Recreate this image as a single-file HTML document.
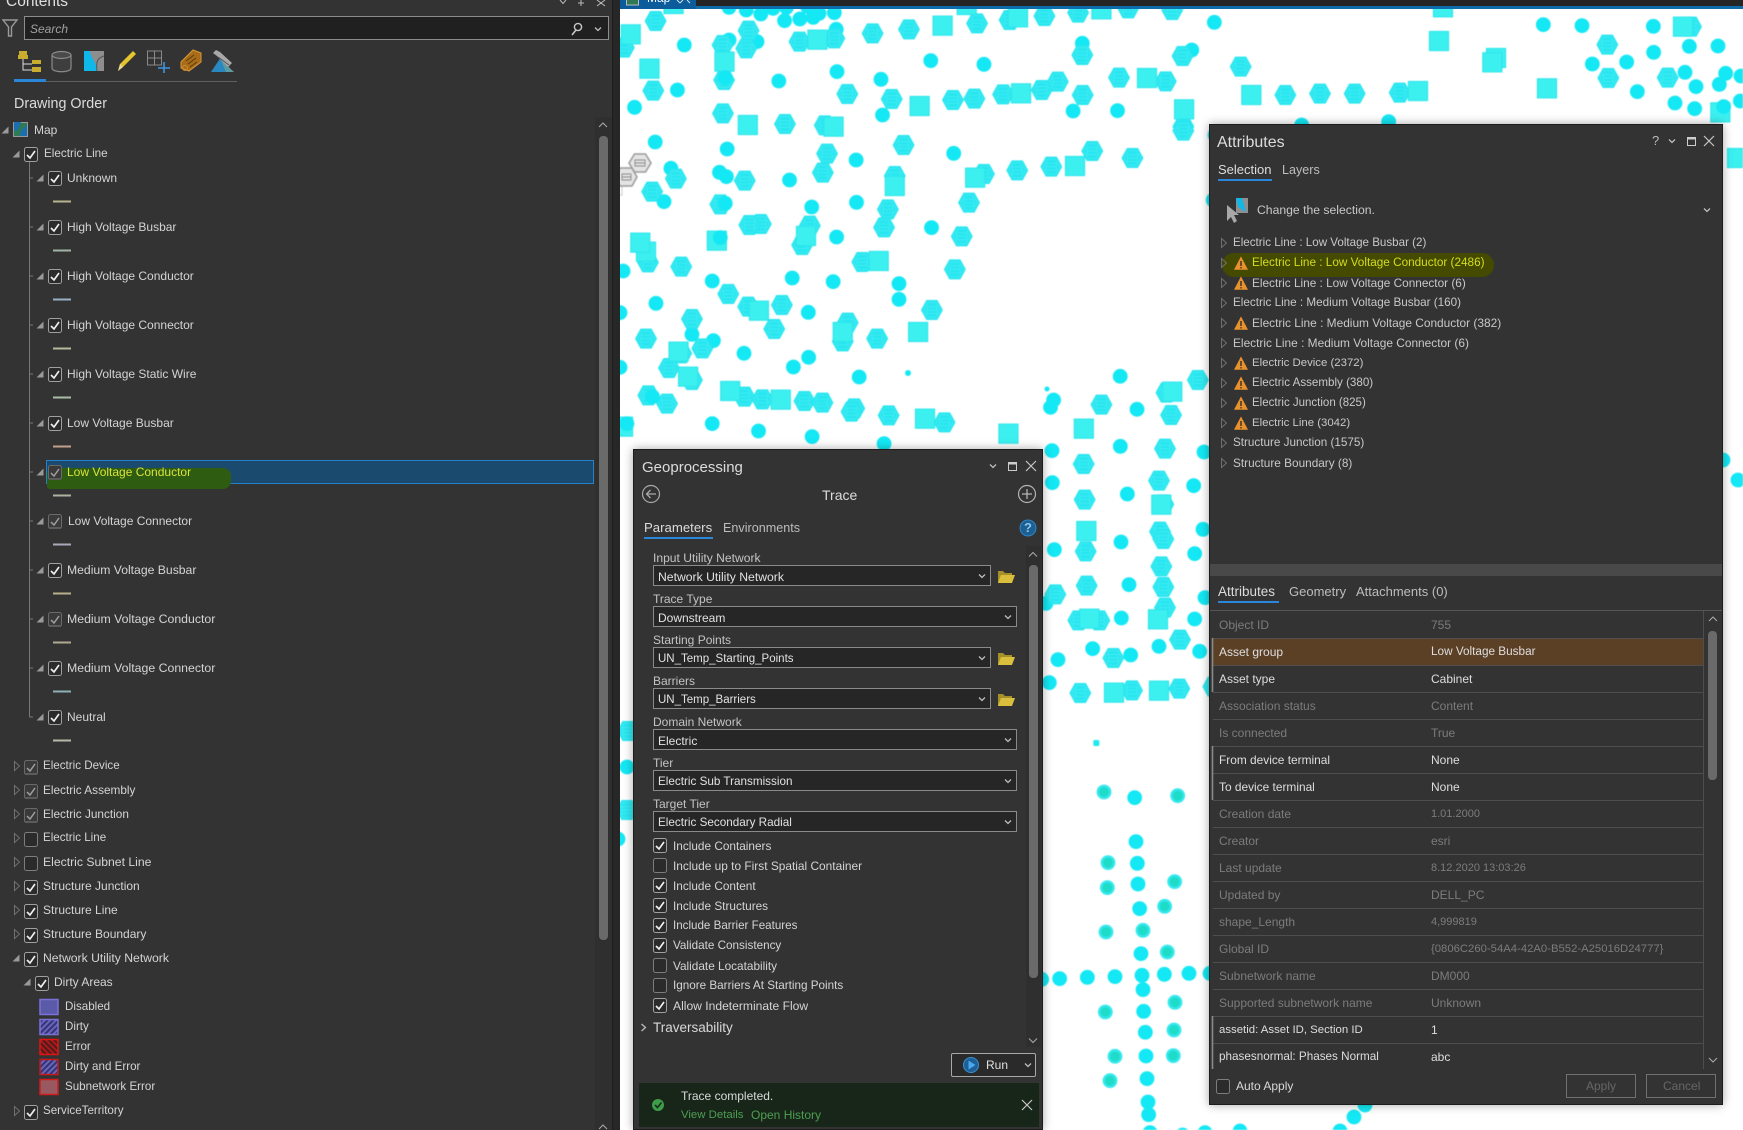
<!DOCTYPE html>
<html><head><meta charset="utf-8"><title>ArcGIS Pro</title>
<style>
html{margin:0;padding:0;width:1743px;height:1130px;overflow:hidden;background:#fff}
body{margin:0;padding:0;background:#fff;position:relative;width:1743px;height:1130px;overflow:hidden;font-family:"Liberation Sans",sans-serif;font-size:12px;color:#d4d4d4}
#w{position:absolute;left:0;top:0;width:1743px;height:1130px;overflow:hidden}
p{position:absolute;margin:0;white-space:nowrap;line-height:16px}
.b{position:absolute;box-sizing:border-box}
.dim{color:#7c7c7c}
.br{color:#dedede}
.fld{position:absolute;box-sizing:border-box;left:653px;height:21px;background:#262626;border:1px solid #8a8a8a}
svg{position:absolute;left:0;top:0}
</style></head><body><div id="w">

<svg width="1743" height="1130" viewBox="0 0 1743 1130" style="filter:blur(.4px)">
<defs>
<g id="c"><circle r="7.4" fill="#14e8f4"/></g>
<g id="g"><circle r="7.4" fill="#35e8ee"/><circle r="5" fill="#1edcc8"/></g>
<g id="h"><polygon points="-11,0 -5.5,-10 5.5,-10 11,0 5.5,10 -5.5,10" fill="#28e6f0"/><polygon points="-8.5,0 -4.2,-7.5 4.2,-7.5 8.5,0 4.2,7.5 -4.2,7.5" fill="none" stroke="#48eef2" stroke-width=".7"/><path d="M-5-3.5H5V3.5H-5ZM-5 0H5" fill="none" stroke="#4aeef2" stroke-width=".7"/></g>
<g id="s"><rect x="-9.6" y="-9.6" width="19.2" height="19.2" fill="#3cf0f0" stroke="#2ce4ea" stroke-width="1"/></g>
<g id="Ac" transform="scale(2.613,3)"><use href="#c"/></g>
<g id="Ah" transform="scale(2.613,3)"><use href="#h"/></g>
<g id="As" transform="scale(2.613,3)"><use href="#s"/></g>
<g id="Bc" transform="scale(3)"><use href="#c"/></g>
<g id="Bg" transform="scale(3)"><use href="#g"/></g>
<g id="Bh" transform="scale(3)"><use href="#h"/></g>
<g id="Bs" transform="scale(3)"><use href="#s"/></g>
</defs>
<g transform="translate(620,0) scale(.3827,.33333)">
<use href="#Ac" x="168" y="135"/><use href="#Ac" x="285" y="120"/><use href="#Ac" x="358" y="125"/><use href="#Ac" x="335" y="90"/><use href="#Ac" x="565" y="88"/><use href="#Ac" x="430" y="62"/><use href="#Ac" x="470" y="57"/><use href="#Ac" x="505" y="52"/><use href="#Ac" x="520" y="40"/><use href="#Ac" x="560" y="38"/><use href="#Ac" x="368" y="42"/><use href="#Ac" x="330" y="30"/><use href="#Ac" x="285" y="22"/><use href="#Ac" x="400" y="25"/><use href="#Ac" x="435" y="22"/><use href="#Ac" x="490" y="20"/><use href="#Ac" x="1553" y="67"/><use href="#Ac" x="812" y="182"/><use href="#Ac" x="951" y="193"/><use href="#Ac" x="1208" y="130"/><use href="#Ac" x="1494" y="150"/><use href="#Ac" x="567" y="215"/><use href="#Ac" x="682" y="238"/><use href="#Ac" x="415" y="243"/><use href="#Ac" x="150" y="270"/><use href="#Ac" x="38" y="322"/><use href="#Ac" x="686" y="345"/><use href="#Ac" x="1184" y="333"/><use href="#Ac" x="1300" y="332"/><use href="#Ac" x="92" y="426"/><use href="#Ac" x="280" y="447"/><use href="#Ac" x="872" y="460"/><use href="#Ac" x="617" y="480"/><use href="#Ac" x="133" y="505"/><use href="#Ac" x="260" y="517"/><use href="#Ac" x="278" y="530"/><use href="#Ac" x="443" y="540"/><use href="#Ac" x="115" y="605"/><use href="#Ac" x="618" y="607"/><use href="#Ac" x="501" y="621"/><use href="#Ac" x="566" y="711"/><use href="#Ac" x="814" y="683"/><use href="#Ac" x="8" y="813"/><use href="#Ac" x="241" y="843"/><use href="#Ac" x="450" y="834"/><use href="#Ac" x="557" y="845"/><use href="#Ac" x="729" y="851"/><use href="#Ac" x="729" y="898"/><use href="#Ac" x="94" y="910"/><use href="#Ac" x="492" y="937"/><use href="#Ac" x="188" y="1003"/><use href="#Ac" x="244" y="1022"/><use href="#Ac" x="324" y="1060"/><use href="#Ac" x="493" y="1072"/><use href="#Ac" x="453" y="1101"/><use href="#Ac" x="625" y="1131"/><use href="#Ac" x="241" y="1271"/><use href="#Ac" x="362" y="1293"/><use href="#Ac" x="502" y="1310"/><use href="#Ac" x="690" y="1331"/><use href="#Ac" x="1133" y="1200"/><use href="#Ac" x="1125" y="1222"/><use href="#Ac" x="1351" y="1228"/><use href="#Ac" x="1555" y="405"/><use href="#Ac" x="1550" y="600"/><use href="#Ac" x="0" y="938"/><use href="#Ac" x="0" y="1102"/>
<use href="#Ah" x="93" y="63"/><use href="#Ah" x="10" y="143"/><use href="#Ah" x="268" y="135"/><use href="#Ah" x="330" y="145"/><use href="#Ah" x="336" y="92"/><use href="#Ah" x="469" y="125"/><use href="#Ah" x="560" y="115"/><use href="#Ah" x="660" y="100"/><use href="#Ah" x="755" y="88"/><use href="#Ah" x="933" y="70"/><use href="#Ah" x="1018" y="60"/><use href="#Ah" x="1109" y="48"/><use href="#Ah" x="1197" y="38"/><use href="#Ah" x="1328" y="25"/><use href="#Ah" x="1443" y="30"/><use href="#Ah" x="1208" y="165"/><use href="#Ah" x="1470" y="168"/><use href="#Ah" x="272" y="240"/><use href="#Ah" x="87" y="272"/><use href="#Ah" x="594" y="282"/><use href="#Ah" x="710" y="297"/><use href="#Ah" x="870" y="300"/><use href="#Ah" x="926" y="296"/><use href="#Ah" x="1001" y="283"/><use href="#Ah" x="1102" y="270"/><use href="#Ah" x="1144" y="245"/><use href="#Ah" x="1209" y="285"/><use href="#Ah" x="1304" y="233"/><use href="#Ah" x="1426" y="244"/><use href="#Ah" x="269" y="340"/><use href="#Ah" x="431" y="372"/><use href="#Ah" x="535" y="376"/><use href="#Ah" x="1472" y="380"/><use href="#Ah" x="1472" y="392"/><use href="#Ah" x="741" y="435"/><use href="#Ah" x="1234" y="453"/><use href="#Ah" x="1339" y="474"/><use href="#Ah" x="1127" y="500"/><use href="#Ah" x="1038" y="511"/><use href="#Ah" x="951" y="522"/><use href="#Ah" x="541" y="461"/><use href="#Ah" x="530" y="518"/><use href="#Ah" x="146" y="536"/><use href="#Ah" x="326" y="542"/><use href="#Ah" x="84" y="575"/><use href="#Ah" x="718" y="528"/><use href="#Ah" x="912" y="608"/><use href="#Ah" x="262" y="613"/><use href="#Ah" x="700" y="628"/><use href="#Ah" x="690" y="682"/><use href="#Ah" x="368" y="672"/><use href="#Ah" x="338" y="675"/><use href="#Ah" x="496" y="677"/><use href="#Ah" x="476" y="735"/><use href="#Ah" x="893" y="709"/><use href="#Ah" x="73" y="787"/><use href="#Ah" x="160" y="800"/><use href="#Ah" x="633" y="786"/><use href="#Ah" x="875" y="808"/><use href="#Ah" x="283" y="882"/><use href="#Ah" x="335" y="920"/><use href="#Ah" x="423" y="915"/><use href="#Ah" x="815" y="930"/><use href="#Ah" x="188" y="957"/><use href="#Ah" x="403" y="987"/><use href="#Ah" x="595" y="968"/><use href="#Ah" x="582" y="1024"/><use href="#Ah" x="672" y="1016"/><use href="#Ah" x="68" y="1016"/><use href="#Ah" x="215" y="1045"/><use href="#Ah" x="160" y="1060"/><use href="#Ah" x="128" y="1104"/><use href="#Ah" x="188" y="1140"/><use href="#Ah" x="74" y="1186"/><use href="#Ah" x="123" y="1211"/><use href="#Ah" x="325" y="1190"/><use href="#Ah" x="372" y="1198"/><use href="#Ah" x="482" y="1203"/><use href="#Ah" x="529" y="1208"/><use href="#Ah" x="612" y="1225"/><use href="#Ah" x="605" y="1235"/><use href="#Ah" x="702" y="1246"/><use href="#Ah" x="848" y="1267"/><use href="#Ah" x="1258" y="1214"/><use href="#Ah" x="1440" y="1245"/><use href="#Ah" x="1510" y="1140"/><use href="#Ah" x="1428" y="1178"/>
<use href="#As" x="28" y="103"/><use href="#As" x="516" y="119"/><use href="#As" x="843" y="77"/><use href="#As" x="1040" y="52"/><use href="#As" x="906" y="15"/><use href="#As" x="1258" y="28"/><use href="#As" x="140" y="12"/><use href="#As" x="77" y="206"/><use href="#As" x="273" y="185"/><use href="#As" x="334" y="375"/><use href="#As" x="558" y="380"/><use href="#As" x="783" y="318"/><use href="#As" x="1048" y="280"/><use href="#As" x="1377" y="234"/><use href="#As" x="1474" y="328"/><use href="#As" x="1189" y="498"/><use href="#As" x="928" y="533"/><use href="#As" x="718" y="558"/><use href="#As" x="253" y="722"/><use href="#As" x="68" y="755"/><use href="#As" x="53" y="728"/><use href="#As" x="486" y="708"/><use href="#As" x="676" y="783"/><use href="#As" x="363" y="932"/><use href="#As" x="582" y="996"/><use href="#As" x="779" y="996"/><use href="#As" x="153" y="1055"/><use href="#As" x="178" y="1130"/><use href="#As" x="288" y="1173"/><use href="#As" x="420" y="1199"/><use href="#As" x="797" y="1256"/><use href="#As" x="1015" y="1301"/><use href="#As" x="1212" y="1286"/><use href="#As" x="1443" y="1175"/><use href="#As" x="8" y="1280"/>
<use href="#Ac" x="18" y="1271"/><use href="#Ac" x="275" y="610"/><use href="#Ac" x="262" y="713"/><use href="#Ac" x="275" y="233"/><use href="#Ac" x="85" y="1190"/><use href="#Ac" x="1307" y="1129"/>
</g>
<circle cx="908" cy="373" r="3" fill="#14e8f4"/><circle cx="1047" cy="389" r="2.5" fill="#14e8f4"/>
<g transform="translate(1040,440) scale(.33333)">
<use href="#Bc" x="36" y="32"/><use href="#Bc" x="241" y="19"/><use href="#Bc" x="492" y="36"/><use href="#Bc" x="37" y="128"/><use href="#Bc" x="262" y="162"/><use href="#Bc" x="461" y="137"/><use href="#Bc" x="243" y="306"/><use href="#Bc" x="489" y="268"/><use href="#Bc" x="43" y="329"/><use href="#Bc" x="464" y="341"/><use href="#Bc" x="267" y="434"/><use href="#Bc" x="495" y="473"/><use href="#Bc" x="18" y="490"/><use href="#Bc" x="244" y="534"/><use href="#Bc" x="464" y="537"/><use href="#Bc" x="158" y="626"/><use href="#Bc" x="272" y="645"/><use href="#Bc" x="357" y="619"/><use href="#Bc" x="479" y="634"/><use href="#Bc" x="54" y="659"/><use href="#Bc" x="28" y="728"/>
<use href="#Bh" x="375" y="26"/><use href="#Bh" x="131" y="72"/><use href="#Bh" x="357" y="122"/><use href="#Bh" x="134" y="179"/><use href="#Bh" x="370" y="193"/><use href="#Bh" x="360" y="275"/><use href="#Bh" x="370" y="297"/><use href="#Bh" x="137" y="334"/><use href="#Bh" x="364" y="379"/><use href="#Bh" x="140" y="437"/><use href="#Bh" x="370" y="441"/><use href="#Bh" x="46" y="463"/><use href="#Bh" x="375" y="503"/><use href="#Bh" x="115" y="541"/><use href="#Bh" x="178" y="541"/><use href="#Bh" x="220" y="654"/><use href="#Bh" x="420" y="599"/><use href="#Bh" x="121" y="759"/><use href="#Bh" x="276" y="751"/><use href="#Bh" x="418" y="746"/><use href="#Bh" x="520" y="740"/>
<use href="#Bs" x="364" y="194"/><use href="#Bs" x="139" y="273"/><use href="#Bs" x="148" y="536"/><use href="#Bs" x="354" y="538"/><use href="#Bs" x="222" y="758"/><use href="#Bs" x="357" y="752"/>
</g>
<g transform="translate(1040,700) scale(.33333)">
<use href="#Bg" x="192" y="276"/><use href="#Bg" x="413" y="287"/><use href="#Bg" x="204" y="488"/><use href="#Bg" x="202" y="563"/><use href="#Bg" x="404" y="545"/><use href="#Bg" x="374" y="619"/><use href="#Bg" x="198" y="696"/><use href="#Bg" x="309" y="691"/><use href="#Bg" x="382" y="756"/><use href="#Bg" x="405" y="907"/><use href="#Bg" x="196" y="936"/><use href="#Bg" x="402" y="990"/><use href="#Bg" x="225" y="1069"/><use href="#Bg" x="400" y="1067"/><use href="#Bg" x="210" y="1142"/>
<use href="#Bc" x="284" y="293"/><use href="#Bc" x="288" y="425"/><use href="#Bc" x="292" y="490"/><use href="#Bc" x="294" y="552"/><use href="#Bc" x="299" y="626"/><use href="#Bc" x="303" y="761"/><use href="#Bc" x="306" y="826"/><use href="#Bc" x="309" y="869"/><use href="#Bc" x="311" y="934"/><use href="#Bc" x="316" y="997"/><use href="#Bc" x="318" y="1068"/><use href="#Bc" x="321" y="1136"/><use href="#Bc" x="324" y="1206"/><use href="#Bc" x="326" y="1244"/><use href="#Bc" x="330" y="1298"/><use href="#Bc" x="59" y="836"/><use href="#Bc" x="142" y="832"/><use href="#Bc" x="225" y="830"/><use href="#Bc" x="373" y="823"/><use href="#Bc" x="447" y="820"/><use href="#Bc" x="510" y="820"/><use href="#Bc" x="5" y="838"/><use href="#Bc" x="428" y="1305"/><use href="#Bc" x="495" y="1298"/>
<rect x="160" y="120" width="18" height="18" rx="4" fill="#20eaf0"/>
</g>
<g transform="translate(1221,0) scale(.33333)">
<use href="#Bc" x="967" y="74"/><use href="#Bc" x="1083" y="77"/><use href="#Bc" x="1297" y="79"/><use href="#Bc" x="1405" y="139"/><use href="#Bc" x="1491" y="138"/><use href="#Bc" x="1298" y="157"/><use href="#Bc" x="1217" y="186"/><use href="#Bc" x="1114" y="192"/><use href="#Bc" x="1249" y="275"/><use href="#Bc" x="1514" y="220"/><use href="#Bc" x="1425" y="260"/><use href="#Bc" x="1495" y="253"/><use href="#Bc" x="1362" y="309"/><use href="#Bc" x="1421" y="326"/><use href="#Bc" x="1560" y="228"/><use href="#Bc" x="1558" y="303"/><use href="#Bc" x="242" y="375"/><use href="#Bc" x="503" y="365"/>
<use href="#Bh" x="59" y="200"/><use href="#Bh" x="193" y="285"/><use href="#Bh" x="297" y="281"/><use href="#Bh" x="401" y="281"/><use href="#Bh" x="536" y="278"/><use href="#Bh" x="1159" y="134"/><use href="#Bh" x="1162" y="234"/><use href="#Bh" x="1340" y="233"/><use href="#Bh" x="1410" y="80"/>
<use href="#Bc" x="1392" y="217"/>
<use href="#Bs" x="666" y="22"/><use href="#Bs" x="654" y="123"/><use href="#Bs" x="825" y="174"/><use href="#Bs" x="814" y="187"/><use href="#Bs" x="91" y="285"/><use href="#Bs" x="591" y="273"/><use href="#Bs" x="978" y="265"/><use href="#Bs" x="1386" y="80"/><use href="#Bs" x="1498" y="337"/>
<use href="#Bc" x="1508" y="320"/>
</g>
<use href="#s" x="1737" y="158"/><use href="#c" x="1723" y="460"/><use href="#c" x="1738" y="480"/>
<use href="#h" x="628" y="731"/><use href="#c" x="627" y="767"/><use href="#h" x="627" y="810"/><use href="#c" x="618" y="839"/>
<use href="#c" x="1240" y="1131"/><use href="#c" x="1340" y="1131"/><use href="#c" x="1365" y="1105"/><use href="#c" x="1354" y="1117"/>
<g fill="#e4e4e4" stroke="#9a9a9a" stroke-width="1.500">
<rect x="619" y="178" width="3" height="17" fill="#fff" stroke="#ccc" stroke-width="1"/>
<polygon points="615,177 620,168 632,168 637,177 632,186 620,186"/>
<polygon points="629,163 634.500,154 645.500,154 651,163 645.500,172 634.500,172"/>
<path d="M622 174H631V180H622ZM622 177H631M635 160H645V166H635ZM635 163H645" fill="none" stroke="#8a8a8a" stroke-width=".9"/>
</g>
</svg>

<!-- top strip -->
<div class="b" style="left:612px;top:0;width:1131px;height:6px;background:#252526"></div>
<div class="b" style="left:620px;top:6px;width:1123px;height:3px;background:#0f6cab"></div>
<div class="b" style="left:620px;top:0;width:76px;height:9px;background:#0c5c9c"></div>
<!-- contents panel -->
<div class="b" style="left:0;top:0;width:612px;height:1130px;background:#333"></div>
<div class="b" style="left:612px;top:0;width:8px;height:1130px;background:#272727;border-left:1px solid #1c1c1c"></div>
<div class="b" style="left:595px;top:117px;width:17px;height:1013px;background:#2f2f2f"></div>
<div class="b" style="left:599px;top:136px;width:9px;height:804px;background:#6a6a6a;border-radius:4px"></div>
<div class="b" style="left:24px;top:16px;width:585px;height:24px;background:#202020;border:1px solid #8c8c8c"></div>
<div class="b" style="left:14px;top:79px;width:32px;height:3px;background:#2a86d8"></div>
<div class="b" style="left:46px;top:81px;width:191px;height:1px;background:#5f5f5f"></div>
<div class="b" style="left:46px;top:460px;width:548px;height:24px;background:#1a4a6e;border:1px solid #2580c8"></div>
<div class="b" style="left:47px;top:468px;width:184px;height:21px;background:#2e5c10;border-radius:6px 8px 8px 3px"></div>

<!-- geoprocessing -->
<div class="b" style="left:633px;top:449px;width:410px;height:681px;background:#333;border:1px solid #1d1d1d;box-shadow:0 0 9px rgba(0,0,0,.35)"></div>
<div class="b" style="left:1026px;top:546px;width:15px;height:501px;background:#2f2f2f"></div>
<div class="b" style="left:1029px;top:565px;width:9px;height:413px;background:#6a6a6a;border-radius:4px"></div>
<div class="b" style="left:644px;top:537px;width:69px;height:2px;background:#2a86d8"></div>
<div class="fld" style="top:565px;width:338px"></div>
<div class="fld" style="top:606px;width:364px"></div>
<div class="fld" style="top:647px;width:338px"></div>
<div class="fld" style="top:688px;width:338px"></div>
<div class="fld" style="top:729px;width:364px"></div>
<div class="fld" style="top:770px;width:364px"></div>
<div class="fld" style="top:811px;width:364px"></div>
<div class="b" style="left:951px;top:1053px;width:85px;height:24px;background:#2a2a2a;border:1px solid #a8a8a8;border-radius:2px"></div>
<div class="b" style="left:639px;top:1083px;width:400px;height:44px;background:#18261a"></div>

<!-- attributes -->
<div class="b" style="left:1209px;top:124px;width:514px;height:981px;background:#333;border:1px solid #1d1d1d;box-shadow:0 0 9px rgba(0,0,0,.35)"></div>
<div class="b" style="left:1218px;top:179px;width:54px;height:2px;background:#2a86d8"></div>
<div class="b" style="left:1222px;top:253px;width:272px;height:24px;background:#444a00;border-radius:12px"></div>
<div class="b" style="left:1210px;top:564px;width:512px;height:12px;background:#494949"></div>
<div class="b" style="left:1218px;top:601px;width:61px;height:2px;background:#2a86d8"></div>
<div class="b" style="left:1210px;top:610px;width:512px;height:1px;background:#555"></div>
<div class="b" style="left:1213px;top:638px;width:490px;height:27px;background:#5c4026"></div>
<div class="b" style="left:1708px;top:631px;width:9px;height:149px;background:#6a6a6a;border-radius:4px"></div>
<div class="b" style="left:1566px;top:1074px;width:70px;height:24px;border:1px solid #707070"></div>
<div class="b" style="left:1646px;top:1074px;width:70px;height:24px;border:1px solid #707070"></div>

<!-- icons overlay -->
<svg width="1743" height="1130" viewBox="0 0 1743 1130">
<defs>
<g id="cb"><rect x=".5" y=".5" width="13" height="14" rx="2" fill="#2b2b2b" stroke="#a0a0a0"/><path d="M3 8l3 3 5-7" fill="none" stroke="#efefef" stroke-width="1.7"/></g>
<g id="cg"><rect x=".5" y=".5" width="13" height="14" rx="2" fill="#3a3a3a" stroke="#6a6a6a"/><path d="M3 8l3 3 5-7" fill="none" stroke="#a0a0a0" stroke-width="1.5"/><rect x="1" y="13" width="12" height="2" fill="#5c5c5c"/></g>
<g id="co"><rect x=".5" y=".5" width="13" height="14" rx="2" fill="#2b2b2b" stroke="#7d7d7d"/></g>
<path id="tf" d="M3.500-3.500V3.500H-3.500Z" fill="#9a9a9a"/>
<path id="to" d="M-2-4.500L3 0L-2 4.500Z" fill="none" stroke="#707070"/>
<path id="ch" d="M-3-1.500L0 1.500L3-1.500" fill="none" stroke="#bdbdbd" stroke-width="1.300"/>
<path id="xx" d="M-5-5L5 5M5-5L-5 5" fill="none" stroke="#c8c8c8" stroke-width="1.200"/>
<g id="wn"><path d="M6-6.500L12.500 6H-.5Z" fill="#e8912d" stroke="#e8912d" stroke-width=".6"/><path d="M6-2.500V2.500M6 3.600V5" stroke="#2f2f2f" stroke-width="1.400"/></g>
<g id="fo"><path d="M0 2H5L7 4H14V14H0Z" fill="#a6902a"/><path d="M0 14L3 6H17L14 14Z" fill="#d9bf3c"/></g>
</defs>
<!-- map tab -->
<rect x="626.500" y="-4" width="12" height="9" fill="#2f7a55" stroke="#bbb"/>
<path d="M677 0L680 3M683 0L680 3M687 0L690 3" fill="none" stroke="#cfe2f2"/>
<!-- contents chrome -->
<path d="M3 20H17L11.500 27V36H8.500V27Z" fill="none" stroke="#9a9a9a" stroke-width="1.400"/>
<circle cx="578" cy="27" r="3.600" fill="none" stroke="#c8c8c8" stroke-width="1.400"/><path d="M576 30L572 35" stroke="#c8c8c8" stroke-width="1.600"/>
<use href="#ch" x="598" y="29"/>
<path d="M560 0L563 3.500L566 0M581 0V6M578 3H584M597 0L605 6M605 0L597 6" fill="none" stroke="#bbb"/>
<!-- toolbar icons -->
<g fill="#c9ad2e">
<rect x="19" y="51" width="8" height="4"/><rect x="18" y="55" width="10" height="4"/><rect x="32" y="60" width="9" height="4"/><rect x="32" y="67" width="9" height="5"/>
</g><path d="M23 59V70H32M23 64H32" fill="none" stroke="#ddd"/>
<path d="M52 55V68C52 73 71 73 71 68V55" fill="#3e3e3e" stroke="#8a8a8a" stroke-width="1.200"/><ellipse cx="61.500" cy="55" rx="9.500" ry="3.500" fill="#4a4a4a" stroke="#8a8a8a" stroke-width="1.200"/>
<rect x="84" y="51" width="20" height="20" fill="#8e8e8e"/><path d="M84 51H90C90 57 97 62 97 71H84Z" fill="#0fb8e8"/><path d="M104 56C97 58 96 62 97 71" fill="none" stroke="#555"/>
<path d="M118 71L120 64L133 51L136 54L123 67Z" fill="#e5c42f"/><path d="M118 71L120 64L123 67Z" fill="#e8d7a0"/>
<path d="M147.500 51H161.500V65H147.500ZM147.500 58H161.500M154.500 51V65" fill="none" stroke="#8a8a8a"/><path d="M164 62V73M158 68H170" stroke="#3c96e0" stroke-width="1.600"/>
<path d="M181 68L181 62L193 50L201 53L201 62L189 71Z" fill="#a86c18" stroke="#d8973a"/><path d="M186 61L194 55M188 64L196 58M190 67L197 62" stroke="#5c3a0e"/><circle cx="185" cy="68" r="2.500" fill="none" stroke="#c98a30"/>
<path d="M211 72L221 57L233 72Z" fill="#2a88c0"/><path d="M221 60L234 72H226Z" fill="#5f9aa0"/><path d="M216 50L220 52L232 63L228 67L217 56L213 53Z" fill="#a8a8a8"/><path d="M218 57L229 65" stroke="#555"/>
<!-- map icon -->
<rect x="13.500" y="122.500" width="14" height="14" fill="#2f7a55" stroke="#999"/><path d="M14 122H21L18 130L14 131ZM21 131L27 125V136H20Z" fill="#1a6fb0"/>
<g fill="none" stroke="#787878"><path d="M29.500 162V717"/><path d="M29.500 178H33M29.500 227H33M29.500 276H33M29.500 325H33M29.500 374H33M29.500 423H33M29.500 472H33M29.500 521H33M29.500 570H33M29.500 619H33M29.500 668H33M29.500 717H33"/></g>
<use href="#tf" x="5" y="130"/><use href="#tf" x="16" y="154"/>
<use href="#cb" x="24" y="147"/>
<use href="#tf" x="40" y="178"/><use href="#cb" x="48" y="171"/>
<use href="#tf" x="40" y="227"/><use href="#cb" x="48" y="220"/>
<use href="#tf" x="40" y="276"/><use href="#cb" x="48" y="269"/>
<use href="#tf" x="40" y="325"/><use href="#cb" x="48" y="318"/>
<use href="#tf" x="40" y="374"/><use href="#cb" x="48" y="367"/>
<use href="#tf" x="40" y="423"/><use href="#cb" x="48" y="416"/>
<use href="#tf" x="40" y="472"/><use href="#cg" x="48" y="465"/>
<use href="#tf" x="40" y="521"/><use href="#cg" x="48" y="514"/>
<use href="#tf" x="40" y="570"/><use href="#cb" x="48" y="563"/>
<use href="#tf" x="40" y="619"/><use href="#cg" x="48" y="612"/>
<use href="#tf" x="40" y="668"/><use href="#cb" x="48" y="661"/>
<use href="#tf" x="40" y="717"/><use href="#cb" x="48" y="710"/>
<g stroke-width="2">
<path d="M53 201.500H71" stroke="#b6b68e"/><path d="M53 250.500H71" stroke="#9fb4a6"/><path d="M53 299.500H71" stroke="#9ab0c4"/><path d="M53 348.500H71" stroke="#b8b89c"/><path d="M53 397.500H71" stroke="#a8bca8"/><path d="M53 446.500H71" stroke="#c0a08c"/><path d="M53 495.500H71" stroke="#b0b0a0"/><path d="M53 544.500H71" stroke="#a8a8b8"/><path d="M53 593.500H71" stroke="#b8b08a"/><path d="M53 642.500H71" stroke="#b0a890"/><path d="M53 691.500H71" stroke="#8eb0b8"/><path d="M53 740.500H71" stroke="#b8b8a8"/>
</g>
<use href="#to" x="16.500" y="766"/><use href="#cg" x="24" y="760"/>
<use href="#to" x="16.500" y="790"/><use href="#cg" x="24" y="784"/>
<use href="#to" x="16.500" y="814"/><use href="#cg" x="24" y="808"/>
<use href="#to" x="16.500" y="838"/><use href="#co" x="24" y="832"/>
<use href="#to" x="16.500" y="862"/><use href="#co" x="24" y="856"/>
<use href="#to" x="16.500" y="886"/><use href="#cb" x="24" y="880"/>
<use href="#to" x="16.500" y="910"/><use href="#cb" x="24" y="904"/>
<use href="#to" x="16.500" y="934"/><use href="#cb" x="24" y="928"/>
<use href="#tf" x="16" y="958"/><use href="#cb" x="24" y="952"/>
<use href="#tf" x="27" y="982"/><use href="#cb" x="35" y="976"/>
<use href="#to" x="16.500" y="1111"/><use href="#cb" x="24" y="1105"/>
<path d="M599 127L603 123L607 127M599 1129L603 1125L607 1129" fill="none" stroke="#aaa"/>
<!-- legend swatches -->
<defs>
<pattern id="p1" width="4" height="4" patternUnits="userSpaceOnUse" patternTransform="rotate(45)"><rect width="4" height="4" fill="#34346e"/><rect width="2" height="4" fill="#6a64c0"/></pattern>
<pattern id="p2" width="4" height="4" patternUnits="userSpaceOnUse" patternTransform="rotate(-45)"><rect width="4" height="4" fill="#4a1c1c"/><rect width="2" height="4" fill="#b01818"/></pattern>
</defs>
<rect x="40" y="999.500" width="18" height="15" fill="#5a5aa8" stroke="#7a72d8" stroke-width="1.500"/>
<rect x="40" y="1019.500" width="18" height="15" fill="url(#p1)" stroke="#7a72d8" stroke-width="1.500"/>
<rect x="40" y="1039.500" width="18" height="15" fill="url(#p2)" stroke="#e01414" stroke-width="1.500"/>
<rect x="40" y="1059.500" width="18" height="15" fill="url(#p1)" stroke="#c81818" stroke-width="1.500"/>
<rect x="40" y="1079.500" width="18" height="15" fill="#985a60" stroke="#d01c1c" stroke-width="1.500"/>
<!-- geoprocessing chrome -->
<use href="#ch" x="993" y="466"/><rect x="1008.500" y="462.500" width="8" height="8" fill="none" stroke="#ccc"/><path d="M1008 463.500H1017" stroke="#ccc" stroke-width="2"/><use href="#xx" x="1031" y="466"/>
<circle cx="651" cy="494" r="8.500" fill="none" stroke="#a8a8a8" stroke-width="1.200"/><path d="M656 494H647M650.500 490L646.500 494L650.500 498" fill="none" stroke="#a8a8a8" stroke-width="1.300"/>
<circle cx="1027" cy="494" r="8.500" fill="none" stroke="#b4b4b4" stroke-width="1.200"/><path d="M1027 489V499M1022 494H1032" stroke="#b4b4b4" stroke-width="1.300"/>
<circle cx="1028" cy="528" r="8" fill="#1c5f90" stroke="#2a86c8"/>
<use href="#ch" x="982" y="576"/><use href="#ch" x="1008" y="617"/><use href="#ch" x="982" y="658"/><use href="#ch" x="982" y="699"/><use href="#ch" x="1008" y="740"/><use href="#ch" x="1008" y="781"/><use href="#ch" x="1008" y="822"/>
<use href="#fo" x="998" y="569"/><use href="#fo" x="998" y="651"/><use href="#fo" x="998" y="692"/>
<use href="#cb" x="653" y="838"/><use href="#co" x="653" y="858"/><use href="#cb" x="653" y="878"/><use href="#cb" x="653" y="898"/><use href="#cb" x="653" y="918"/><use href="#cb" x="653" y="938"/><use href="#co" x="653" y="958"/><use href="#co" x="653" y="978"/><use href="#cb" x="653" y="998"/>
<path d="M641.500 1024L645.500 1027.500L641.500 1031" fill="none" stroke="#bbb" stroke-width="1.300"/>
<path d="M1029 556.500L1033 552.500L1037 556.500M1029 1038.500L1033 1042.500L1037 1038.500" fill="none" stroke="#aaa"/>
<circle cx="971" cy="1065" r="7.500" fill="#1d5f96" stroke="#3c90d0"/><path d="M968.500 1060.500V1069.500L975.500 1065Z" fill="#4aa8ec"/>
<use href="#ch" x="1028" y="1065"/>
<circle cx="658" cy="1105" r="6" fill="#3e9c4a"/><path d="M655 1105L657.500 1107.500L661.500 1102.500" fill="none" stroke="#16301b" stroke-width="1.600"/>
<use href="#xx" x="1027" y="1105"/>
<!-- attributes chrome -->
<use href="#ch" x="1672" y="141"/><rect x="1687.500" y="137.500" width="8" height="8" fill="none" stroke="#ccc"/><path d="M1687 138.500H1696" stroke="#ccc" stroke-width="2"/><use href="#xx" x="1709" y="141"/>
<path d="M1236 198H1248V213H1236Z" fill="#8f8f8f"/><path d="M1236 198H1242L1246 212L1238 207Z" fill="#10b8e8"/><path d="M1227 205V221L1231 217L1234 223L1237 221L1234 215L1239 215Z" fill="#a8a8a8"/>
<use href="#ch" x="1707" y="210"/>
<use href="#to" x="1223.500" y="243"/><use href="#to" x="1223.500" y="263"/><use href="#to" x="1223.500" y="283"/><use href="#to" x="1223.500" y="303"/><use href="#to" x="1223.500" y="323"/><use href="#to" x="1223.500" y="343"/><use href="#to" x="1223.500" y="363"/><use href="#to" x="1223.500" y="383"/><use href="#to" x="1223.500" y="403"/><use href="#to" x="1223.500" y="423"/><use href="#to" x="1223.500" y="443"/><use href="#to" x="1223.500" y="463"/>
<use href="#wn" x="1235" y="263.500"/><use href="#wn" x="1235" y="283.500"/><use href="#wn" x="1235" y="323.500"/><use href="#wn" x="1235" y="363.500"/><use href="#wn" x="1235" y="383.500"/><use href="#wn" x="1235" y="403.500"/><use href="#wn" x="1235" y="423.500"/>
<g stroke="#4e4e4e"><path d="M1213 638.500H1703M1213 665.500H1703M1213 692.500H1703M1213 719.500H1703M1213 746.500H1703M1213 773.500H1703M1213 800.500H1703M1213 827.500H1703M1213 854.500H1703M1213 881.500H1703M1213 908.500H1703M1213 935.500H1703M1213 962.500H1703M1213 989.500H1703M1213 1016.500H1703M1213 1043.500H1703M1703.500 611V1069"/></g>
<g stroke="#8a8a8a" stroke-width="1.600"><path d="M1212.500 638V692M1212.500 746V800M1212.500 1016V1069"/></g>
<path d="M1709 621L1713 617L1717 621M1709 1058L1713 1062L1717 1058" fill="none" stroke="#aaa"/>
<use href="#co" x="1216" y="1079"/>
</svg>

<!-- contents text -->
<p style="left:6px;top:-6px;font-size:15.500px;color:#e0e0e0">Contents</p>
<p style="left:30px;top:21px;font-style:italic;color:#a0a0a0">Search</p>
<p style="left:14px;top:96px;font-size:14.300px;color:#dcdcdc">Drawing Order</p>
<p style="left:34px;top:122px">Map</p>
<p style="left:44px;top:146px;font-size:11.700px">Electric Line</p>
<p style="left:67px;top:170px">Unknown</p>
<p style="left:67px;top:219px">High Voltage Busbar</p>
<p style="left:67px;top:268px">High Voltage Conductor</p>
<p style="left:67px;top:317px">High Voltage Connector</p>
<p style="left:67px;top:366px">High Voltage Static Wire</p>
<p style="left:67px;top:415px">Low Voltage Busbar</p>
<p style="left:67px;top:464px;color:#dbe23a">Low Voltage Conductor</p>
<p style="left:68px;top:513px">Low Voltage Connector</p>
<p style="left:67px;top:562px;font-size:12.200px">Medium Voltage Busbar</p>
<p style="left:67px;top:611px;font-size:12.300px">Medium Voltage Conductor</p>
<p style="left:67px;top:660px;font-size:12.300px">Medium Voltage Connector</p>
<p style="left:67px;top:709px">Neutral</p>
<p style="left:43px;top:758px;font-size:11.600px">Electric Device</p>
<p style="left:43px;top:782px;font-size:11.800px">Electric Assembly</p>
<p style="left:43px;top:806px;font-size:11.800px">Electric Junction</p>
<p style="left:43px;top:830px;font-size:11.600px">Electric Line</p>
<p style="left:43px;top:854px;font-size:12.200px">Electric Subnet Line</p>
<p style="left:43px;top:878px">Structure Junction</p>
<p style="left:43px;top:902px">Structure Line</p>
<p style="left:43px;top:926px">Structure Boundary</p>
<p style="left:43px;top:950px;font-size:12.200px">Network Utility Network</p>
<p style="left:54px;top:974px">Dirty Areas</p>
<p style="left:65px;top:999px;font-size:11.600px">Disabled</p>
<p style="left:65px;top:1019px;font-size:11.600px">Dirty</p>
<p style="left:65px;top:1039px;font-size:11.600px">Error</p>
<p style="left:65px;top:1059px;font-size:11.600px">Dirty and Error</p>
<p style="left:65px;top:1079px;font-size:11.600px">Subnetwork Error</p>
<p style="left:43px;top:1103px;font-size:11.600px">ServiceTerritory</p>
<p style="left:647px;top:-10px;color:#fff">Map</p>

<!-- geoprocessing text -->
<p style="left:642px;top:460px;font-size:15px;color:#dcdcdc">Geoprocessing</p>
<p style="left:822px;top:487px;font-size:14px;color:#dcdcdc">Trace</p>
<p style="left:644px;top:520px;font-size:13.200px;color:#dcdcdc">Parameters</p>
<p style="left:723px;top:520px;font-size:12.600px;color:#bdbdbd">Environments</p>
<p style="left:1024px;top:520px;font-size:13px;font-weight:bold;color:#8cc4ee">?</p>
<p style="left:653px;top:550px;color:#c4c4c4;font-size:12.100px">Input Utility Network</p>
<p style="left:658px;top:569px;color:#e2e2e2;font-size:12.200px">Network Utility Network</p>
<p style="left:653px;top:591px;color:#c4c4c4">Trace Type</p>
<p style="left:658px;top:610px;color:#e2e2e2">Downstream</p>
<p style="left:653px;top:632px;color:#c4c4c4">Starting Points</p>
<p style="left:658px;top:651px;font-size:11.500px;color:#e2e2e2">UN_Temp_Starting_Points</p>
<p style="left:653px;top:673px;color:#c4c4c4">Barriers</p>
<p style="left:658px;top:692px;font-size:11.500px;color:#e2e2e2">UN_Temp_Barriers</p>
<p style="left:653px;top:714px;color:#c4c4c4">Domain Network</p>
<p style="left:658px;top:733px;color:#e2e2e2">Electric</p>
<p style="left:653px;top:755px;color:#c4c4c4">Tier</p>
<p style="left:658px;top:774px;color:#e2e2e2;font-size:11.700px">Electric Sub Transmission</p>
<p style="left:653px;top:796px;color:#c4c4c4">Target Tier</p>
<p style="left:658px;top:815px;color:#e2e2e2;font-size:11.700px">Electric Secondary Radial</p>
<p style="left:673px;top:838px;font-size:11.800px">Include Containers</p>
<p style="left:673px;top:858px;font-size:11.900px">Include up to First Spatial Container</p>
<p style="left:673px;top:878px;font-size:11.800px">Include Content</p>
<p style="left:673px;top:898px;font-size:11.800px">Include Structures</p>
<p style="left:673px;top:918px;font-size:11.600px">Include Barrier Features</p>
<p style="left:673px;top:938px;font-size:11.700px">Validate Consistency</p>
<p style="left:673px;top:958px;font-size:11.800px">Validate Locatability</p>
<p style="left:673px;top:978px;font-size:11.700px">Ignore Barriers At Starting Points</p>
<p style="left:673px;top:998px;font-size:12.100px">Allow Indeterminate Flow</p>
<p style="left:653px;top:1020px;font-size:13.500px;color:#d8d8d8">Traversability</p>
<p style="left:986px;top:1057px;color:#e0e0e0">Run</p>
<p style="left:681px;top:1088px;color:#d8d8d8">Trace completed.</p>
<p style="left:681px;top:1107px;color:#4f9e52;font-size:11.400px">View Details</p>
<p style="left:751px;top:1107px;color:#4f9e52">Open History</p>

<!-- attributes text -->
<p style="left:1217px;top:135px;font-size:16px;color:#dcdcdc">Attributes</p>
<p style="left:1652px;top:133px;font-size:13px;color:#bbb">?</p>
<p style="left:1218px;top:162px;font-size:13px;color:#dcdcdc">Selection</p>
<p style="left:1282px;top:162px;font-size:12.600px;color:#bdbdbd">Layers</p>
<p style="left:1257px;top:202px;color:#c8c8c8;font-size:12.200px">Change the selection.</p>
<p style="left:1233px;top:235px;color:#c8c8c8;font-size:11.600px">Electric Line : Low Voltage Busbar (2)</p>
<p style="left:1252px;top:255px;color:#d4dc20;font-size:11.750px">Electric Line : Low Voltage Conductor (2486)</p>
<p style="left:1252px;top:275px;color:#c8c8c8;font-size:11.800px">Electric Line : Low Voltage Connector (6)</p>
<p style="left:1233px;top:295px;color:#c8c8c8;font-size:11.700px">Electric Line : Medium Voltage Busbar (160)</p>
<p style="left:1252px;top:315px;color:#c8c8c8;font-size:11.900px">Electric Line : Medium Voltage Conductor (382)</p>
<p style="left:1233px;top:335px;color:#c8c8c8;font-size:11.900px">Electric Line : Medium Voltage Connector (6)</p>
<p style="left:1252px;top:355px;color:#c8c8c8;font-size:11.400px">Electric Device (2372)</p>
<p style="left:1252px;top:375px;color:#c8c8c8;font-size:11.600px">Electric Assembly (380)</p>
<p style="left:1252px;top:395px;color:#c8c8c8;font-size:11.500px">Electric Junction (825)</p>
<p style="left:1252px;top:415px;color:#c8c8c8;font-size:11.400px">Electric Line (3042)</p>
<p style="left:1233px;top:435px;color:#c8c8c8;font-size:11.700px">Structure Junction (1575)</p>
<p style="left:1233px;top:455px;color:#c8c8c8;font-size:11.800px">Structure Boundary (8)</p>
<p style="left:1218px;top:584px;font-size:13.500px;color:#dcdcdc">Attributes</p>
<p style="left:1289px;top:584px;font-size:13px;color:#bdbdbd">Geometry</p>
<p style="left:1356px;top:584px;font-size:13px;color:#bdbdbd">Attachments (0)</p>
<p class="dim" style="left:1219px;top:617px">Object ID</p><p class="dim" style="left:1431px;top:617px">755</p>
<p class="br" style="left:1219px;top:644px">Asset group</p><p class="br" style="left:1431px;top:644px;font-size:11.750px">Low Voltage Busbar</p>
<p class="br" style="left:1219px;top:671px">Asset type</p><p class="br" style="left:1431px;top:671px">Cabinet</p>
<p class="dim" style="left:1219px;top:698px">Association status</p><p class="dim" style="left:1431px;top:698px">Content</p>
<p class="dim" style="left:1219px;top:725px">Is connected</p><p class="dim" style="left:1431px;top:725px">True</p>
<p class="br" style="left:1219px;top:752px;font-size:11.900px">From device terminal</p><p class="br" style="left:1431px;top:752px">None</p>
<p class="br" style="left:1219px;top:779px;font-size:11.900px">To device terminal</p><p class="br" style="left:1431px;top:779px">None</p>
<p class="dim" style="left:1219px;top:806px">Creation date</p><p class="dim" style="left:1431px;top:806px;font-size:11px">1.01.2000</p>
<p class="dim" style="left:1219px;top:833px">Creator</p><p class="dim" style="left:1431px;top:833px">esri</p>
<p class="dim" style="left:1219px;top:860px">Last update</p><p class="dim" style="left:1431px;top:860px;font-size:11px">8.12.2020 13:03:26</p>
<p class="dim" style="left:1219px;top:887px">Updated by</p><p class="dim" style="left:1431px;top:887px">DELL_PC</p>
<p class="dim" style="left:1219px;top:914px">shape_Length</p><p class="dim" style="left:1431px;top:914px;font-size:11px">4,999819</p>
<p class="dim" style="left:1219px;top:941px">Global ID</p><p class="dim" style="left:1431px;top:941px;font-size:11.300px">{0806C260-54A4-42A0-B552-A25016D24777}</p>
<p class="dim" style="left:1219px;top:968px">Subnetwork name</p><p class="dim" style="left:1431px;top:968px">DM000</p>
<p class="dim" style="left:1219px;top:995px">Supported subnetwork name</p><p class="dim" style="left:1431px;top:995px">Unknown</p>
<p class="br" style="left:1219px;top:1022px;font-size:11.400px">assetid: Asset ID, Section ID</p><p class="br" style="left:1431px;top:1022px">1</p>
<p class="br" style="left:1219px;top:1049px;font-size:11.700px">phasesnormal: Phases Normal</p><p class="br" style="left:1431px;top:1049px">abc</p>
<p style="left:1236px;top:1078px;color:#d8d8d8">Auto Apply</p>
<p style="left:1586px;top:1078px;color:#666">Apply</p>
<p style="left:1663px;top:1078px;color:#666">Cancel</p>
</div></body></html>
